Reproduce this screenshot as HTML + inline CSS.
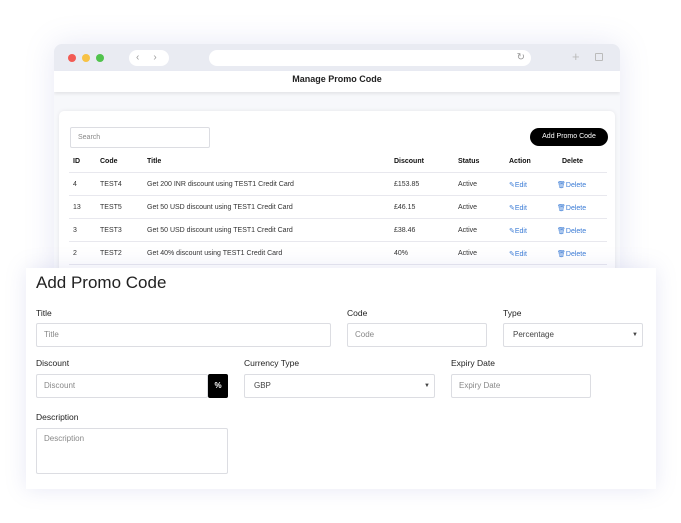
<!DOCTYPE html>
<html><head><style>
*{box-sizing:border-box;margin:0;padding:0}
body{width:681px;height:523px;background:#fff;font-family:"Liberation Sans",sans-serif;position:relative;overflow:hidden;color:#222}
.a{position:absolute}
.win{left:54px;top:44px;width:566px;height:240px;background:#f7f8fb;border-radius:8px 8px 0 0;box-shadow:0 0 30px rgba(120,130,200,.18);overflow:hidden}
.bar{left:0;top:0;width:566px;height:27px;background:#e9ebf2}
.dot{width:8px;height:8px;border-radius:50%;top:10px}
.hdr{left:0;top:27px;width:566px;height:21px;background:#fff;box-shadow:0 2px 3px rgba(0,0,0,.08);text-align:center;font-size:9px;font-weight:bold;line-height:17px}
.card{left:5px;top:67px;width:556px;height:200px;background:#fff;border-radius:5px;box-shadow:0 0 4px rgba(0,0,0,.08)}
.t{font-size:7px;color:#333}
.th{font-size:7px;font-weight:bold;color:#111}
.ln{height:1px;background:#e8e8ee;left:10px;width:538px}
.blue{color:#3a7bd5}
.form{left:26px;top:268px;width:630px;height:221px;background:#fff;box-shadow:0 0 20px rgba(120,130,200,.18)}
.lb{font-size:8.5px;color:#222}
.in{border:1px solid #dcdde2;border-radius:2px;height:24px;font-size:8px;color:#888;padding-left:7px;line-height:22px;background:#fff}
</style></head><body>
<div class="a win">
 <div class="a bar"></div>
 <div class="a dot" style="left:14px;background:#f25b54"></div>
 <div class="a dot" style="left:28px;background:#f7c245"></div>
 <div class="a dot" style="left:42px;background:#51c34d"></div>
 <div class="a" style="left:75px;top:6px;width:40px;height:16px;background:#fff;border-radius:8px;font-size:10px;color:#999;line-height:16px"><span style="margin-left:7px">‹</span><span style="margin-left:14px">›</span></div>
 <div class="a" style="left:155px;top:6px;width:322px;height:16px;background:#fff;border-radius:8px;font-size:10px;color:#999;text-align:right;padding-right:6px;line-height:16px">↻</div>
 <div class="a" style="left:518px;top:5px;font-size:13px;color:#bbb">+</div>
 <div class="a" style="left:541px;top:9px;width:8px;height:8px;border:1px solid #bbb;border-radius:1px"></div>
 <div class="a hdr">Manage Promo Code</div>
 <div class="a card">
  <div class="a in" style="left:11px;top:16px;width:140px;height:21px;font-size:7px;line-height:19px">Search</div>
  <div class="a" style="left:471px;top:17px;width:78px;height:18px;background:#000;color:#fff;border-radius:9px;font-size:7px;text-align:center;line-height:18px">Add Promo Code</div>
  <div class="a th" style="left:14px;top:47px">ID</div>
  <div class="a th" style="left:41px;top:47px">Code</div>
  <div class="a th" style="left:88px;top:47px">Title</div>
  <div class="a th" style="left:335px;top:47px">Discount</div>
  <div class="a th" style="left:399px;top:47px">Status</div>
  <div class="a th" style="left:450px;top:47px">Action</div>
  <div class="a th" style="left:503px;top:47px">Delete</div>
  <div class="a ln" style="top:61px"></div>
  <div class="a t" style="left:14px;top:70px">4</div><div class="a t" style="left:41px;top:70px">TEST4</div><div class="a t" style="left:88px;top:70px">Get 200 INR discount using TEST1 Credit Card</div><div class="a t" style="left:335px;top:70px">£153.85</div><div class="a t" style="left:399px;top:70px">Active</div><div class="a t blue" style="left:450px;top:70px">✎Edit</div><div class="a t blue" style="left:498px;top:70px">🗑Delete</div>
  <div class="a ln" style="top:84px"></div>
  <div class="a t" style="left:14px;top:93px">13</div><div class="a t" style="left:41px;top:93px">TEST5</div><div class="a t" style="left:88px;top:93px">Get 50 USD discount using TEST1 Credit Card</div><div class="a t" style="left:335px;top:93px">£46.15</div><div class="a t" style="left:399px;top:93px">Active</div><div class="a t blue" style="left:450px;top:93px">✎Edit</div><div class="a t blue" style="left:498px;top:93px">🗑Delete</div>
  <div class="a ln" style="top:107px"></div>
  <div class="a t" style="left:14px;top:116px">3</div><div class="a t" style="left:41px;top:116px">TEST3</div><div class="a t" style="left:88px;top:116px">Get 50 USD discount using TEST1 Credit Card</div><div class="a t" style="left:335px;top:116px">£38.46</div><div class="a t" style="left:399px;top:116px">Active</div><div class="a t blue" style="left:450px;top:116px">✎Edit</div><div class="a t blue" style="left:498px;top:116px">🗑Delete</div>
  <div class="a ln" style="top:130px"></div>
  <div class="a t" style="left:14px;top:139px">2</div><div class="a t" style="left:41px;top:139px">TEST2</div><div class="a t" style="left:88px;top:139px">Get 40% discount using TEST1 Credit Card</div><div class="a t" style="left:335px;top:139px">40%</div><div class="a t" style="left:399px;top:139px">Active</div><div class="a t blue" style="left:450px;top:139px">✎Edit</div><div class="a t blue" style="left:498px;top:139px">🗑Delete</div>
  <div class="a ln" style="top:153px"></div>
 </div>
</div>
<div class="a form">
 <div class="a" style="left:10px;top:5px;font-size:17px;color:#222">Add Promo Code</div>
 <div class="a lb" style="left:10px;top:40px">Title</div>
 <div class="a in" style="left:10px;top:55px;width:295px">Title</div>
 <div class="a lb" style="left:321px;top:40px">Code</div>
 <div class="a in" style="left:321px;top:55px;width:140px">Code</div>
 <div class="a lb" style="left:477px;top:40px">Type</div>
 <div class="a in" style="left:477px;top:55px;width:140px;color:#444;padding-left:9px">Percentage<span style="position:absolute;right:4px;font-size:6px">▼</span></div>
 <div class="a lb" style="left:10px;top:90px">Discount</div>
 <div class="a in" style="left:10px;top:106px;width:172px">Discount</div>
 <div class="a" style="left:182px;top:106px;width:20px;height:24px;background:#000;color:#fff;font-size:8px;font-weight:bold;text-align:center;line-height:24px;border-radius:2px">%</div>
 <div class="a lb" style="left:218px;top:90px">Currency Type</div>
 <div class="a in" style="left:218px;top:106px;width:191px;color:#444;padding-left:9px">GBP<span style="position:absolute;right:4px;font-size:6px">▼</span></div>
 <div class="a lb" style="left:425px;top:90px">Expiry Date</div>
 <div class="a in" style="left:425px;top:106px;width:140px">Expiry Date</div>
 <div class="a lb" style="left:10px;top:144px">Description</div>
 <div class="a in" style="left:10px;top:160px;width:192px;height:46px;line-height:20px">Description</div>
</div>
</body></html>
